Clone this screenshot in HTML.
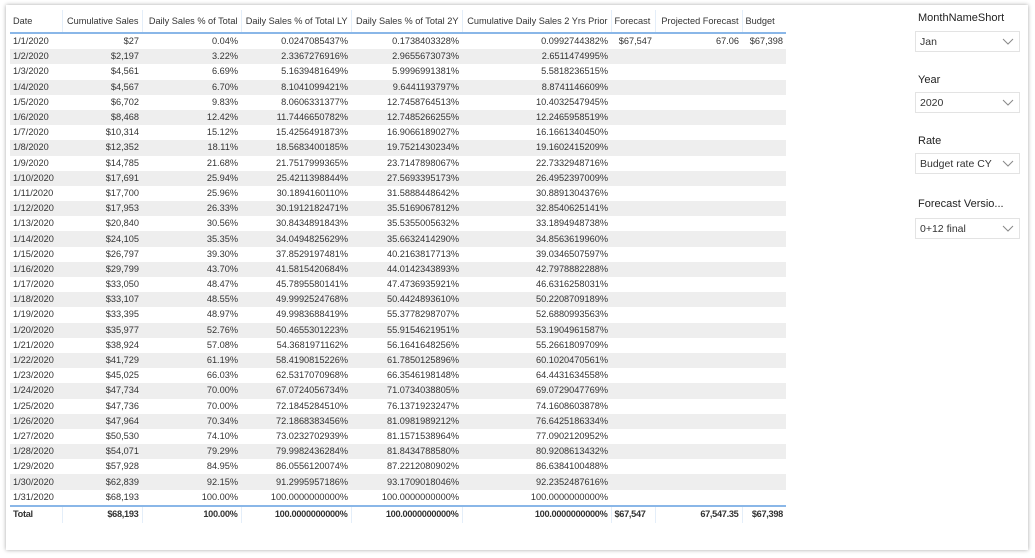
<!DOCTYPE html>
<html><head><meta charset="utf-8"><style>
body{margin:0;width:1035px;height:558px;background:#fff;font-family:"Liberation Sans",sans-serif;overflow:hidden;position:relative}
.card{position:absolute;left:6px;top:5px;width:1022px;height:545px;background:#fff;box-shadow:0 0 4px rgba(0,0,0,.35)}
table{position:absolute;left:10px;top:10px;border-collapse:collapse;table-layout:fixed;width:776px;font-size:9.2px;color:#333}
td,th{padding:0 3px;white-space:nowrap;overflow:hidden;height:15.2px;line-height:15px;text-align:right}
th{font-weight:normal;height:22px;border-bottom:2px solid #8ab7e8;border-left:1px solid #e4eef9;color:#333}
th:first-child,td:first-child{text-align:left;border-left:none}
tr.g td{background:#eeeeee}
tr.t td{font-weight:bold;border-top:2px solid #8ab7e8;height:16px;letter-spacing:-.3px;border-left:1px solid #e4eef9}
tr.t td:first-child{border-left:none}
.sl{position:absolute;left:918px;font-size:11px;color:#222}
.dd{position:absolute;left:915px;width:105px;height:21px;border:1px solid #e3e3e3;box-sizing:border-box;font-size:10.5px;color:#333;line-height:20px;padding-left:4px}
.dd svg{position:absolute;right:5px;top:6px}
</style></head><body>
<div class="card"></div>
<table>
<colgroup><col style="width:52px"><col style="width:80px"><col style="width:99px"><col style="width:110px"><col style="width:111px"><col style="width:149px"><col style="width:44px"><col style="width:87px"><col style="width:44px"></colgroup>
<tr><th>Date</th><th>Cumulative Sales</th><th>Daily Sales % of Total</th><th>Daily Sales % of Total LY</th><th>Daily Sales % of Total 2Y</th><th>Cumulative Daily Sales 2 Yrs Prior</th><th style="text-align:left">Forecast</th><th>Projected Forecast</th><th style="text-align:left">Budget</th></tr>
<tr><td>1/1/2020</td><td>$27</td><td>0.04%</td><td>0.0247085437%</td><td>0.1738403328%</td><td>0.0992744382%</td><td>$67,547</td><td>67.06</td><td>$67,398</td></tr>
<tr class="g"><td>1/2/2020</td><td>$2,197</td><td>3.22%</td><td>2.3367276916%</td><td>2.9655673073%</td><td>2.6511474995%</td><td></td><td></td><td></td></tr>
<tr><td>1/3/2020</td><td>$4,561</td><td>6.69%</td><td>5.1639481649%</td><td>5.9996991381%</td><td>5.5818236515%</td><td></td><td></td><td></td></tr>
<tr class="g"><td>1/4/2020</td><td>$4,567</td><td>6.70%</td><td>8.1041099421%</td><td>9.6441193797%</td><td>8.8741146609%</td><td></td><td></td><td></td></tr>
<tr><td>1/5/2020</td><td>$6,702</td><td>9.83%</td><td>8.0606331377%</td><td>12.7458764513%</td><td>10.4032547945%</td><td></td><td></td><td></td></tr>
<tr class="g"><td>1/6/2020</td><td>$8,468</td><td>12.42%</td><td>11.7446650782%</td><td>12.7485266255%</td><td>12.2465958519%</td><td></td><td></td><td></td></tr>
<tr><td>1/7/2020</td><td>$10,314</td><td>15.12%</td><td>15.4256491873%</td><td>16.9066189027%</td><td>16.1661340450%</td><td></td><td></td><td></td></tr>
<tr class="g"><td>1/8/2020</td><td>$12,352</td><td>18.11%</td><td>18.5683400185%</td><td>19.7521430234%</td><td>19.1602415209%</td><td></td><td></td><td></td></tr>
<tr><td>1/9/2020</td><td>$14,785</td><td>21.68%</td><td>21.7517999365%</td><td>23.7147898067%</td><td>22.7332948716%</td><td></td><td></td><td></td></tr>
<tr class="g"><td>1/10/2020</td><td>$17,691</td><td>25.94%</td><td>25.4211398844%</td><td>27.5693395173%</td><td>26.4952397009%</td><td></td><td></td><td></td></tr>
<tr><td>1/11/2020</td><td>$17,700</td><td>25.96%</td><td>30.1894160110%</td><td>31.5888448642%</td><td>30.8891304376%</td><td></td><td></td><td></td></tr>
<tr class="g"><td>1/12/2020</td><td>$17,953</td><td>26.33%</td><td>30.1912182471%</td><td>35.5169067812%</td><td>32.8540625141%</td><td></td><td></td><td></td></tr>
<tr><td>1/13/2020</td><td>$20,840</td><td>30.56%</td><td>30.8434891843%</td><td>35.5355005632%</td><td>33.1894948738%</td><td></td><td></td><td></td></tr>
<tr class="g"><td>1/14/2020</td><td>$24,105</td><td>35.35%</td><td>34.0494825629%</td><td>35.6632414290%</td><td>34.8563619960%</td><td></td><td></td><td></td></tr>
<tr><td>1/15/2020</td><td>$26,797</td><td>39.30%</td><td>37.8529197481%</td><td>40.2163817713%</td><td>39.0346507597%</td><td></td><td></td><td></td></tr>
<tr class="g"><td>1/16/2020</td><td>$29,799</td><td>43.70%</td><td>41.5815420684%</td><td>44.0142343893%</td><td>42.7978882288%</td><td></td><td></td><td></td></tr>
<tr><td>1/17/2020</td><td>$33,050</td><td>48.47%</td><td>45.7895580141%</td><td>47.4736935921%</td><td>46.6316258031%</td><td></td><td></td><td></td></tr>
<tr class="g"><td>1/18/2020</td><td>$33,107</td><td>48.55%</td><td>49.9992524768%</td><td>50.4424893610%</td><td>50.2208709189%</td><td></td><td></td><td></td></tr>
<tr><td>1/19/2020</td><td>$33,395</td><td>48.97%</td><td>49.9983688419%</td><td>55.3778298707%</td><td>52.6880993563%</td><td></td><td></td><td></td></tr>
<tr class="g"><td>1/20/2020</td><td>$35,977</td><td>52.76%</td><td>50.4655301223%</td><td>55.9154621951%</td><td>53.1904961587%</td><td></td><td></td><td></td></tr>
<tr><td>1/21/2020</td><td>$38,924</td><td>57.08%</td><td>54.3681971162%</td><td>56.1641648256%</td><td>55.2661809709%</td><td></td><td></td><td></td></tr>
<tr class="g"><td>1/22/2020</td><td>$41,729</td><td>61.19%</td><td>58.4190815226%</td><td>61.7850125896%</td><td>60.1020470561%</td><td></td><td></td><td></td></tr>
<tr><td>1/23/2020</td><td>$45,025</td><td>66.03%</td><td>62.5317070968%</td><td>66.3546198148%</td><td>64.4431634558%</td><td></td><td></td><td></td></tr>
<tr class="g"><td>1/24/2020</td><td>$47,734</td><td>70.00%</td><td>67.0724056734%</td><td>71.0734038805%</td><td>69.0729047769%</td><td></td><td></td><td></td></tr>
<tr><td>1/25/2020</td><td>$47,736</td><td>70.00%</td><td>72.1845284510%</td><td>76.1371923247%</td><td>74.1608603878%</td><td></td><td></td><td></td></tr>
<tr class="g"><td>1/26/2020</td><td>$47,964</td><td>70.34%</td><td>72.1868383456%</td><td>81.0981989212%</td><td>76.6425186334%</td><td></td><td></td><td></td></tr>
<tr><td>1/27/2020</td><td>$50,530</td><td>74.10%</td><td>73.0232702939%</td><td>81.1571538964%</td><td>77.0902120952%</td><td></td><td></td><td></td></tr>
<tr class="g"><td>1/28/2020</td><td>$54,071</td><td>79.29%</td><td>79.9982436284%</td><td>81.8434788580%</td><td>80.9208613432%</td><td></td><td></td><td></td></tr>
<tr><td>1/29/2020</td><td>$57,928</td><td>84.95%</td><td>86.0556120074%</td><td>87.2212080902%</td><td>86.6384100488%</td><td></td><td></td><td></td></tr>
<tr class="g"><td>1/30/2020</td><td>$62,839</td><td>92.15%</td><td>91.2995957186%</td><td>93.1709018046%</td><td>92.2352487616%</td><td></td><td></td><td></td></tr>
<tr><td>1/31/2020</td><td>$68,193</td><td>100.00%</td><td>100.0000000000%</td><td>100.0000000000%</td><td>100.0000000000%</td><td></td><td></td><td></td></tr>
<tr class="t"><td>Total</td><td>$68,193</td><td>100.00%</td><td>100.0000000000%</td><td>100.0000000000%</td><td>100.0000000000%</td><td style="text-align:left">$67,547</td><td>67,547.35</td><td>$67,398</td></tr>
</table>

<div class="sl" style="top:12px">MonthNameShort</div>
<div class="dd" style="top:31px">Jan<svg width="12" height="7"><path d="M1 1 L6 6 L11 1" fill="none" stroke="#888" stroke-width="1"/></svg></div>
<div class="sl" style="top:74px">Year</div>
<div class="dd" style="top:92px">2020<svg width="12" height="7"><path d="M1 1 L6 6 L11 1" fill="none" stroke="#888" stroke-width="1"/></svg></div>
<div class="sl" style="top:135px">Rate</div>
<div class="dd" style="top:153px">Budget rate CY<svg width="12" height="7"><path d="M1 1 L6 6 L11 1" fill="none" stroke="#888" stroke-width="1"/></svg></div>
<div class="sl" style="top:198px">Forecast Versio...</div>
<div class="dd" style="top:218px">0+12 final<svg width="12" height="7"><path d="M1 1 L6 6 L11 1" fill="none" stroke="#888" stroke-width="1"/></svg></div>
</body></html>
